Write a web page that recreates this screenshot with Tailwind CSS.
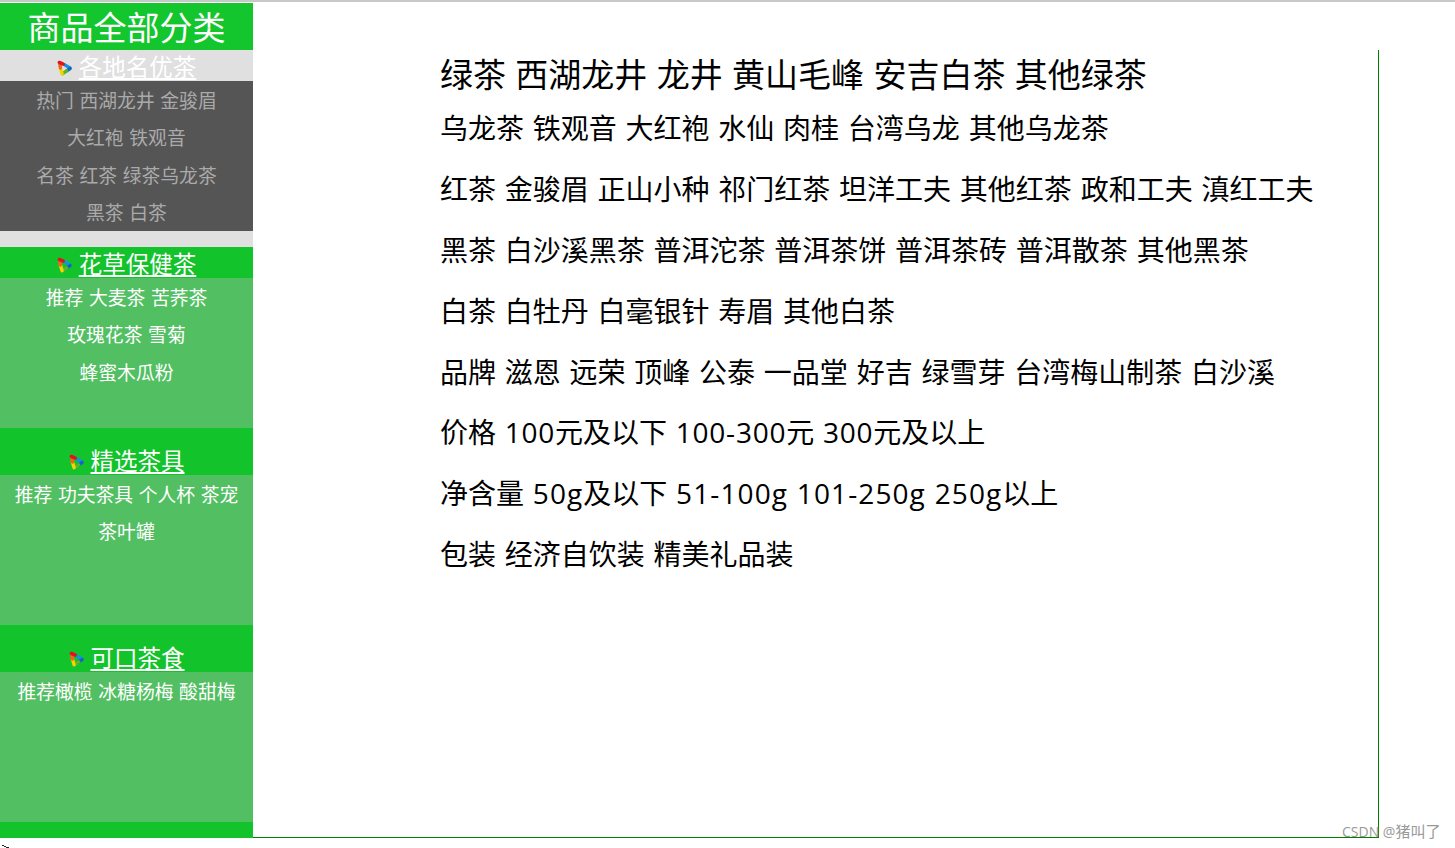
<!DOCTYPE html>
<html lang="zh-CN">
<head>
  <meta charset="UTF-8" />
  <title>商品全部分类</title>
  <script src="https://cdn.jsdelivr.net/npm/@tailwindcss/browser@4"></script>
</head>
<body class="bg-white h-screen overflow-hidden font-['Open_Sans','Noto_Sans_CJK_SC',sans-serif]">
  <div class="h-[2px] bg-[#c8c8c8] mb-px"></div>

  <div class="flex items-start">
    <!-- 左侧分类 -->
    <div class="w-[253px] shrink-0 text-center text-white">
      <div class="h-[47px] bg-[#14c62d] text-[33px] leading-[49px]">商品全部分类</div>

      <div class="h-[197px] bg-[#e0e0e0]">
        <div class="h-[31px] pt-[4px] flex items-center justify-center gap-[5px] text-[23.5px]">
          <svg class="w-[17px] h-[17px]" viewBox="1.500 0 15 15" fill="none" stroke-width="3" stroke-linecap="round"><path d="M8 5L13 8" stroke="#1a8fe6"/><path d="M13 8.500L10 10.500" stroke="#1565b8"/><path d="M10 10.500L6.500 13" stroke="#5bb52c"/><path d="M4.500 8L6 13" stroke="#f6d400"/><path d="M4 4.500L4.500 8" stroke="#f0641e"/><path d="M3.500 3L7 4.500" stroke="#e0141c"/></svg>
          <a href="#" class="underline">各地名优茶</a>
        </div>
        <div class="h-[150px] pt-[2px] bg-[#555] text-[#aaa] text-[18.8px] leading-[37.4px] [word-spacing:0.8px]">
          <p>热门 西湖龙井 金骏眉</p>
          <p>大红袍 铁观音</p>
          <p>名茶 红茶 绿茶乌龙茶</p>
          <p>黑茶 白茶</p>
        </div>
      </div>

      <div class="h-[197px] bg-[#13c32b]">
        <div class="h-[31px] pt-[4px] flex items-center justify-center gap-[5px] text-[23.5px]">
          <svg class="w-[17px] h-[17px]" viewBox="1.500 0 15 15" fill="none" stroke-width="3" stroke-linecap="round"><path d="M8 5L13 8" stroke="#1a8fe6"/><path d="M13 8.500L10 10.500" stroke="#1565b8"/><path d="M10 10.500L6.500 13" stroke="#5bb52c"/><path d="M4.500 8L6 13" stroke="#f6d400"/><path d="M4 4.500L4.500 8" stroke="#f0641e"/><path d="M3.500 3L7 4.500" stroke="#e0141c"/></svg>
          <a href="#" class="underline">花草保健茶</a>
        </div>
        <div class="h-[150px] pt-[2px] bg-[#52bf63] text-[18.8px] leading-[37.4px] [word-spacing:0.8px]">
          <p>推荐 大麦茶 苦荞茶</p>
          <p>玫瑰花茶 雪菊</p>
          <p>蜂蜜木瓜粉</p>
        </div>
      </div>

      <div class="h-[197px] bg-[#13c32b]">
        <div class="h-[31px] pt-[4px] flex items-center justify-center gap-[5px] text-[23.5px]">
          <svg class="w-[17px] h-[17px]" viewBox="1.500 0 15 15" fill="none" stroke-width="3" stroke-linecap="round"><path d="M8 5L13 8" stroke="#1a8fe6"/><path d="M13 8.500L10 10.500" stroke="#1565b8"/><path d="M10 10.500L6.500 13" stroke="#5bb52c"/><path d="M4.500 8L6 13" stroke="#f6d400"/><path d="M4 4.500L4.500 8" stroke="#f0641e"/><path d="M3.500 3L7 4.500" stroke="#e0141c"/></svg>
          <a href="#" class="underline">精选茶具</a>
        </div>
        <div class="h-[150px] pt-[2px] bg-[#52bf63] text-[18.8px] leading-[37.4px] [word-spacing:0.8px]">
          <p>推荐 功夫茶具 个人杯 茶宠</p>
          <p>茶叶罐</p>
        </div>
      </div>

      <div class="h-[197px] bg-[#13c32b]">
        <div class="h-[31px] pt-[4px] flex items-center justify-center gap-[5px] text-[23.5px]">
          <svg class="w-[17px] h-[17px]" viewBox="1.500 0 15 15" fill="none" stroke-width="3" stroke-linecap="round"><path d="M8 5L13 8" stroke="#1a8fe6"/><path d="M13 8.500L10 10.500" stroke="#1565b8"/><path d="M10 10.500L6.500 13" stroke="#5bb52c"/><path d="M4.500 8L6 13" stroke="#f6d400"/><path d="M4 4.500L4.500 8" stroke="#f0641e"/><path d="M3.500 3L7 4.500" stroke="#e0141c"/></svg>
          <a href="#" class="underline">可口茶食</a>
        </div>
        <div class="h-[150px] pt-[2px] bg-[#52bf63] text-[18.8px] leading-[37.4px] [word-spacing:0.8px]">
          <p>推荐橄榄 冰糖杨梅 酸甜梅</p>
        </div>
      </div>
    </div>

    <!-- 右侧内容 -->
    <div class="w-[1126px] h-[788px] mt-[47px] border-r border-b border-[#008000] pl-[187px] text-black text-[28px] leading-[60.9px] whitespace-nowrap [word-spacing:1.5px]">
      <p class="text-[33px] leading-[50px] -mb-[2px] [word-spacing:0.8px]">绿茶 西湖龙井 龙井 黄山毛峰 安吉白茶 其他绿茶</p>
      <p>乌龙茶 铁观音 大红袍 水仙 肉桂 台湾乌龙 其他乌龙茶</p>
      <p>红茶 金骏眉 正山小种 祁门红茶 坦洋工夫 其他红茶 政和工夫 滇红工夫</p>
      <p>黑茶 白沙溪黑茶 普洱沱茶 普洱茶饼 普洱茶砖 普洱散茶 其他黑茶</p>
      <p>白茶 白牡丹 白毫银针 寿眉 其他白茶</p>
      <p>品牌 滋恩 远荣 顶峰 公泰 一品堂 好吉 绿雪芽 台湾梅山制茶 白沙溪</p>
      <p class="-mt-[0.5px]">价格 <span class="tracking-[0.75px]">100</span>元及以下 <span class="tracking-[0.75px]">100-300</span>元 <span class="tracking-[0.75px]">300</span>元及以上</p>
      <p>净含量 <span class="tracking-[1.1px]">50g</span>及以下 <span class="tracking-[1.1px]">51-100g</span> <span class="tracking-[1.1px]">101-250g</span> <span class="tracking-[1.1px]">250g</span>以上</p>
      <p>包装 经济自饮装 精美礼品装</p>
    </div>
  </div>

  <div class="absolute left-[1342px] top-[823px] text-[14px] leading-[17px] text-[#999]">CSDN @<span class="text-[15px]">猪叫了</span></div>
  <svg class="absolute left-[2px] top-[845px] w-[7px] h-[3px]" viewBox="0 0 7 3"><path d="M0 0h2v1h2v1h3v1h-3v-1h-2v-1h-2z" fill="#222"/></svg>
</body>
</html>
